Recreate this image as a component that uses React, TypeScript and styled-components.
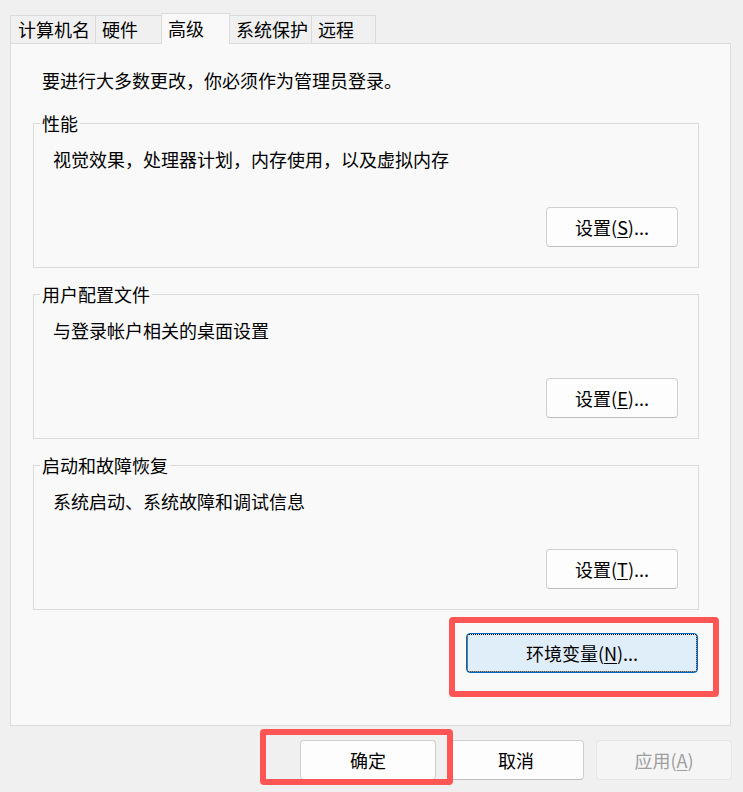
import styled, { createGlobalStyle } from "styled-components";

const GlobalStyle = createGlobalStyle`
  html, body {
    margin: 0;
    padding: 0;
    background: #f0f0f0;
  }
  body {
    font-family: "Noto Sans CJK SC", "Noto Sans", sans-serif;
    font-size: 18px;
    color: #000;
  }
`;

const Window = styled.div`
  position: relative;
  width: 743px;
  height: 792px;
  overflow: hidden;
  background: #f0f0f0;
`;

const TabStrip = styled.div`
  display: flex;
  align-items: flex-end;
  padding: 13px 0 0 10px;
  position: relative;
  z-index: 1;
`;

const Tab = styled.div<{ $width: number; $active?: boolean }>`
  box-sizing: border-box;
  width: ${(p) => p.$width}px;
  height: ${(p) => (p.$active ? 31 : 28)}px;
  margin-left: -1px;
  margin-bottom: ${(p) => (p.$active ? -1 : 0)}px;
  padding-left: 6px;
  border: 1px solid #dcdcdc;
  border-bottom: none;
  background: ${(p) => (p.$active ? "#f9f9f9" : "#f0f0f0")};
  line-height: ${(p) => (p.$active ? 28 : 27)}px;
  white-space: nowrap;

  &:first-child {
    margin-left: 0;
    padding-left: 7px;
  }
`;

const Panel = styled.div`
  box-sizing: border-box;
  margin: 0 12px 0 10px;
  height: 683px;
  padding: 24px 31px 0 22px;
  border: 1px solid #dcdcdc;
  background: #f9f9f9;
  display: flex;
  flex-direction: column;
`;

const Intro = styled.div`
  line-height: 24px;
  padding-left: 9px;
  margin-bottom: 19px;
`;

const Group = styled.fieldset`
  margin: 0 0 14px;
  padding: 0;
  border: 1px solid #dadada;
  min-inline-size: 0;
`;

const Legend = styled.legend`
  margin-left: 6px;
  padding: 0 2px;
  line-height: 24px;
`;

const GroupBody = styled.div`
  display: flex;
  flex-direction: column;
  padding: 12px 20px 20px 19px;
`;

const Description = styled.div`
  line-height: 24px;
`;

const Button = styled.button<{ $width?: number; $focused?: boolean }>`
  position: relative;
  box-sizing: border-box;
  width: ${(p) => p.$width ?? 132}px;
  height: 40px;
  padding: 0;
  border: 1px solid ${(p) => (p.$focused ? "#0067c0" : "#d0d0d0")};
  border-bottom-color: ${(p) => (p.$focused ? "#0067c0" : "#bdbdbd")};
  border-radius: 4px;
  background: ${(p) => (p.$focused ? "#e0eef9" : "#fdfdfd")};
  color: #000;
  font-family: inherit;
  font-size: 18px;
  font-weight: 400;
  line-height: 24px;
  outline: none;

  &::after {
    content: "";
    display: ${(p) => (p.$focused ? "block" : "none")};
    position: absolute;
    inset: 0;
    border: 1px dotted #000;
    border-radius: 2px;
    pointer-events: none;
  }

  &:disabled {
    background: #f5f5f5;
    border-color: #e5e5e5;
    color: #9e9e9e;
  }

  u {
    text-underline-offset: 2px;
  }
`;

const SettingsButton = styled(Button)`
  align-self: flex-end;
  margin-top: 36px;
`;

const EnvRow = styled.div`
  display: flex;
  justify-content: flex-end;
  margin-top: 9px;
  padding-right: 1px;
`;

const Footer = styled.div`
  display: flex;
  justify-content: flex-end;
  gap: 12px;
  padding: 14px 11px 0 0;
`;

const Highlight = styled.div<{ $x: number; $y: number; $w: number; $h: number }>`
  position: absolute;
  left: ${(p) => p.$x}px;
  top: ${(p) => p.$y}px;
  width: ${(p) => p.$w}px;
  height: ${(p) => p.$h}px;
  box-sizing: border-box;
  border: 6px solid #ff5555;
  border-radius: 4px;
  pointer-events: none;
`;

const tabs = [
  { label: "计算机名", width: 86 },
  { label: "硬件", width: 67 },
  { label: "高级", width: 69, active: true },
  { label: "系统保护", width: 83 },
  { label: "远程", width: 65 },
];

const groups = [
  { title: "性能", text: "视觉效果，处理器计划，内存使用，以及虚拟内存", key: "S" },
  { title: "用户配置文件", text: "与登录帐户相关的桌面设置", key: "E" },
  { title: "启动和故障恢复", text: "系统启动、系统故障和调试信息", key: "T" },
];

function App() {
  return (
    <Window>
      <GlobalStyle />
      <TabStrip>
        {tabs.map((t) => (
          <Tab key={t.label} $width={t.width} $active={t.active}>
            {t.label}
          </Tab>
        ))}
      </TabStrip>
      <Panel>
        <Intro>要进行大多数更改，你必须作为管理员登录。</Intro>
        {groups.map((g) => (
          <Group key={g.title}>
            <Legend>{g.title}</Legend>
            <GroupBody>
              <Description>{g.text}</Description>
              <SettingsButton>
                设置(<u>{g.key}</u>)...
              </SettingsButton>
            </GroupBody>
          </Group>
        ))}
        <EnvRow>
          <Button $width={232} $focused>
            环境变量(<u>N</u>)...
          </Button>
        </EnvRow>
      </Panel>
      <Footer>
        <Button $width={136}>确定</Button>
        <Button $width={136}>取消</Button>
        <Button $width={136} disabled>
          应用(<u>A</u>)
        </Button>
      </Footer>
      <Highlight $x={449} $y={617} $w={270} $h={80} />
      <Highlight $x={260} $y={729} $w={193} $h={56} />
    </Window>
  );
}

export default App;
